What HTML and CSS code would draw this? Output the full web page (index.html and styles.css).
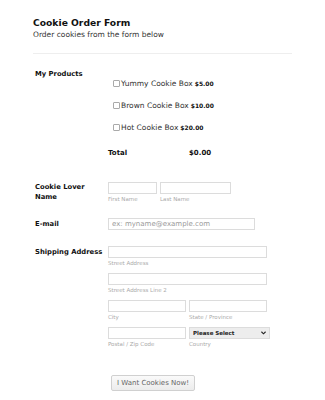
FILE: index.html
```html
<!DOCTYPE html>
<html>
<head>
<meta charset="utf-8">
<link rel="stylesheet" href="styles.css">
</head>
<body>
<div class="page">
  <div class="header">
    <h1 class="title">Cookie Order Form</h1>
    <p class="subtitle">Order cookies from the form below</p>
  </div>
  <div class="divider"></div>

  <div class="row products-row">
    <div class="label">My Products</div>
    <div class="field products">
      <label class="product"><input type="checkbox" class="check">Yummy Cookie Box <b class="price">$5.00</b></label>
      <label class="product"><input type="checkbox" class="check">Brown Cookie Box <b class="price">$10.00</b></label>
      <label class="product"><input type="checkbox" class="check">Hot Cookie Box <b class="price">$20.00</b></label>
    </div>
  </div>
  <div class="total-row">
    <span class="total-label">Total</span>
    <span class="total-value">$0.00</span>
  </div>

  <div class="row name-row">
    <div class="label">Cookie Lover<br>Name</div>
    <div class="field inline">
      <div class="sub"><input class="input w-first" type="text"><span class="sublabel">First Name</span></div>
      <div class="sub"><input class="input w-last" type="text"><span class="sublabel">Last Name</span></div>
    </div>
  </div>

  <div class="row email-row">
    <div class="label label-mid">E-mail</div>
    <div class="field">
      <input class="input w-email" type="text" placeholder="ex: myname@example.com">
    </div>
  </div>

  <div class="row address-row">
    <div class="label label-addr">Shipping Address</div>
    <div class="field address">
      <div class="sub"><input class="input w-full" type="text"><span class="sublabel">Street Address</span></div>
      <div class="sub"><input class="input w-full" type="text"><span class="sublabel">Street Address Line 2</span></div>
      <div class="pair">
        <div class="sub"><input class="input w-half" type="text"><span class="sublabel">City</span></div>
        <div class="sub"><input class="input w-half" type="text"><span class="sublabel">State / Province</span></div>
      </div>
      <div class="pair">
        <div class="sub"><input class="input w-half" type="text"><span class="sublabel">Postal / Zip Code</span></div>
        <div class="sub"><select class="select"><option>Please Select</option></select><span class="sublabel">Country</span></div>
      </div>
    </div>
  </div>

  <div class="submit-row">
    <button class="button" type="button">I Want Cookies Now!</button>
  </div>
</div>
</body>
</html>
```

FILE: styles.css
```css
html, body {
  margin: 0;
  padding: 0;
  background: #fff;
}
body {
  font-family: "DejaVu Sans", Verdana, sans-serif;
  color: #111;
}
.page {
  padding: 17px 0 0 33px;
  width: 259px;
}
.title {
  margin: 0;
  font-size: 9.2px;
  line-height: 12px;
  font-weight: bold;
  color: #111;
}
.subtitle {
  margin: 1px 0 0;
  font-size: 7.5px;
  line-height: 10px;
  color: #333;
}
.divider {
  margin-top: 13px;
  height: 1px;
  background: #eeeeee;
}
.row {
  display: flex;
  padding-left: 2px;
}
.label {
  width: 73px;
  flex: none;
  font-size: 6.8px;
  line-height: 10px;
  font-weight: bold;
  color: #111;
  white-space: nowrap;
}
.field {
  display: flex;
  flex-direction: column;
}
.products-row {
  margin-top: 15px;
}
.products {
  padding-top: 8px;
  gap: 10px;
}
.product {
  display: flex;
  align-items: center;
  height: 12px;
  margin-left: 5px;
  font-size: 7.5px;
  color: #333;
  white-space: nowrap;
}
.check {
  -webkit-appearance: none;
  appearance: none;
  box-sizing: border-box;
  width: 7px;
  height: 7px;
  margin: 1px 1px 0 0;
  border: 1px solid #aaa;
  border-radius: 1px;
  background: #fff;
}
.price {
  font-size: 6px;
  margin-left: 2px;
  color: #111;
}
.total-row {
  display: flex;
  margin: 15px 0 0 75px;
  font-size: 7px;
  line-height: 10px;
  font-weight: bold;
  color: #111;
}
.total-label {
  width: 81px;
}
.name-row {
  margin-top: 24px;
}
.inline {
  flex-direction: row;
  gap: 3px;
}
.sub {
  display: flex;
  flex-direction: column;
}
.input {
  box-sizing: border-box;
  height: 12px;
  margin: 0;
  padding: 0 3px;
  border: 1px solid #dcdcdc;
  font-family: "DejaVu Sans", Verdana, sans-serif;
  font-size: 7px;
  color: #333;
  background: #fff;
  outline: none;
}
.input::placeholder {
  color: #999;
}
.sublabel {
  margin-top: 1px;
  font-size: 5.5px;
  line-height: 8px;
  color: #aaa;
  white-space: nowrap;
}
.w-first { width: 49px; }
.w-last { width: 71px; }
.w-email { width: 147px; }
.w-full { width: 159px; }
.w-half { width: 78px; }
.email-row {
  margin-top: 15px;
  align-items: center;
}
.address-row {
  margin-top: 16px;
}
.label-addr {
  padding-top: 1px;
}
.address {
  gap: 6px;
}
.pair {
  display: flex;
  gap: 3px;
}
.select {
  box-sizing: border-box;
  width: 81px;
  height: 12px;
  margin: 0;
  padding: 0 3px;
  border: 1px solid #dcdcdc;
  font-family: "DejaVu Sans", Verdana, sans-serif;
  font-size: 5.5px;
  font-weight: bold;
  color: #222;
  -webkit-appearance: none;
  appearance: none;
  background-color: #ededed;
  background-image: url("data:image/svg+xml,%3Csvg xmlns='http://www.w3.org/2000/svg' width='6' height='4' viewBox='0 0 6 4'%3E%3Cpath d='M0.5 0.5 L3 3 L5.5 0.5' fill='none' stroke='%23222' stroke-width='1.3'/%3E%3C/svg%3E");
  background-repeat: no-repeat;
  background-position: right 3px center;
  background-size: 5px 4px;
}
.submit-row {
  margin: 22px 0 0 78px;
}
.button {
  box-sizing: border-box;
  height: 16px;
  width: 84px;
  padding: 0;
  border: 1px solid #d0d0d0;
  border-radius: 2px;
  background: linear-gradient(#fafafa, #ececec);
  font-family: "DejaVu Sans", Verdana, sans-serif;
  font-size: 7px;
  color: #666;
}
```
